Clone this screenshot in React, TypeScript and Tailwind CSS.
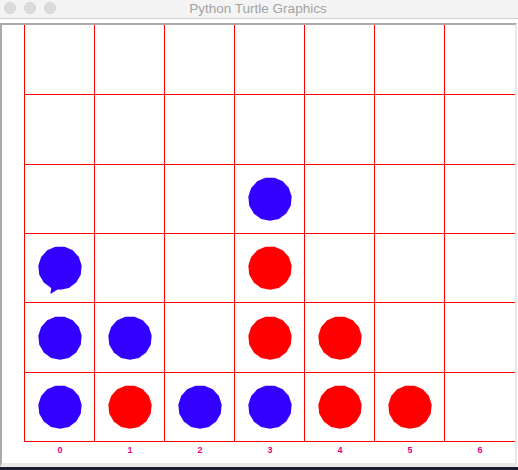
import React from "react";

type P = "b" | "r" | "t" | null;

const board: P[][] = [
  [null, null, null, null, null, null, null],
  [null, null, null, null, null, null, null],
  [null, null, null, "b", null, null, null],
  ["t", null, null, "r", null, null, null],
  ["b", "b", null, "r", "r", null, null],
  ["b", "r", "b", "b", "r", "r", null],
];

const R = 21.8;
const poly = Array.from({ length: 15 }, (_, k) => {
  const t = ((-90 + 24 * k) * Math.PI) / 180;
  return `${(R * Math.cos(t)).toFixed(2)},${(-R * Math.sin(t)).toFixed(2)}`;
}).join(" ");

function Piece({ kind }: { kind: P }) {
  if (!kind) return null;
  const color = kind === "r" ? "#ff0000" : "#3300ff";
  return (
    <svg width="44" height="44" viewBox="-22 -22 44 44" className="overflow-visible ml-[1px]">
      <polygon points={poly} fill={color} />
      {kind === "t" && <polygon points="-9.7,26 -8.6,19 1,19.5" fill={color} />}
    </svg>
  );
}

export default function App() {
  const rows = ["h-[70px]", "h-[70px]", "h-[69px]", "h-[69px]", "h-[70px]", "h-[69px]"];
  return (
    <div
      className="w-[518px] h-[470px] bg-white flex flex-col overflow-hidden"
      style={{ fontFamily: '"Liberation Sans", Arial, sans-serif' }}
    >
      <div className="h-[19px] shrink-0 bg-[#f4f4f4] border-b border-[#d1d1d1] grid grid-cols-[1fr_auto_1fr]">
        <div className="flex gap-[8px] pl-[4px] pt-[2px]">
          <div className="w-[12px] h-[12px] rounded-full bg-[#dcdcdc] border border-[#d2d2d2]" />
          <div className="w-[12px] h-[12px] rounded-full bg-[#dcdcdc] border border-[#d2d2d2]" />
          <div className="w-[12px] h-[12px] rounded-full bg-[#dcdcdc] border border-[#d2d2d2]" />
        </div>
        <div className="text-[13.5px] leading-[18px] text-[#a3a3a3] -translate-x-[1px]">Python Turtle Graphics</div>
        <div />
      </div>
      <div className="h-[4px] shrink-0" />
      <div className="w-[517px] h-[444px] shrink-0 border-l-2 border-t-2 border-r-2 border-b-4 border-l-[#aaaaaa] border-t-[#aaaaaa] border-r-[#e8e8e8] border-b-[#e8e8e8] overflow-hidden">
        <div className="ml-[22px] w-[491px]">
          {board.map((row, ri) => (
            <div key={ri} className={`flex ${rows[ri]}`}>
              {row.map((p, ci) => (
                <div
                  key={ci}
                  className={`${ci === 6 ? "w-[71px]" : "w-[70px]"} shrink-0 border-l border-b border-[#ff0000] flex items-center justify-center`}
                >
                  <Piece kind={p} />
                </div>
              ))}
            </div>
          ))}
          <div className="flex pt-[4px]">
            {[0, 1, 2, 3, 4, 5, 6].map((n) => (
              <div
                key={n}
                className="w-[70px] shrink-0 pl-[2px] text-center text-[9px] leading-[9px] font-bold text-[#e8007f]"
              >
                {n}
              </div>
            ))}
          </div>
        </div>
      </div>
      <div className="h-[3px] shrink-0 bg-[#181c2c]" />
    </div>
  );
}
